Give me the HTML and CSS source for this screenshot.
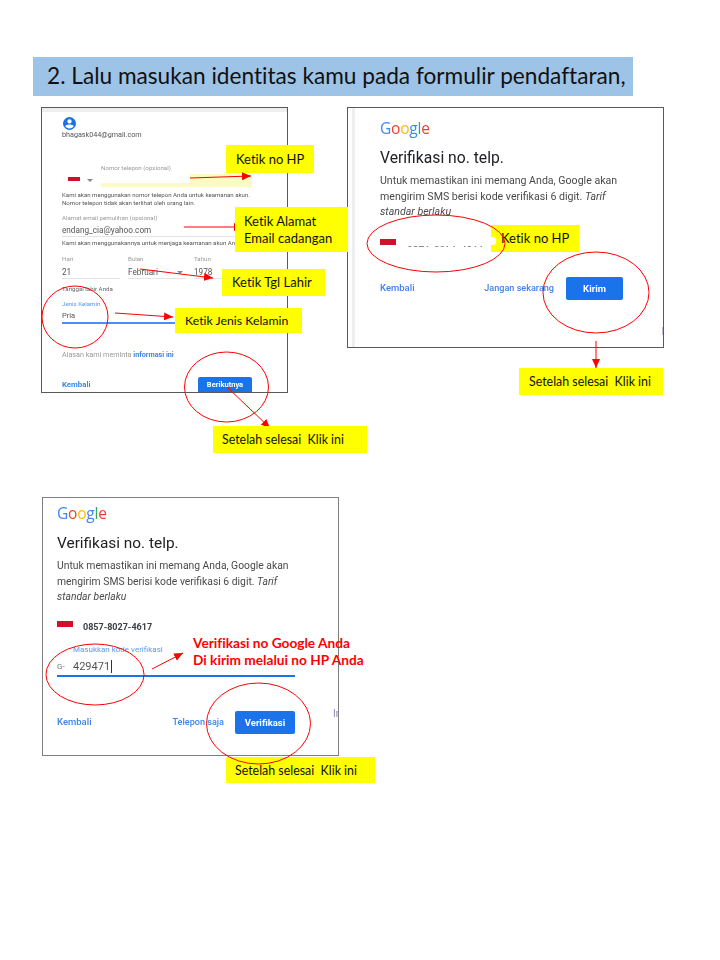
FILE: index.html
```html
<!DOCTYPE html>
<html lang="id">
<head>
<meta charset="utf-8">
<title>Formulir pendaftaran</title>
<link rel="stylesheet" href="styles.css">
</head>
<body>
<main class="slide">
  <h1 class="title">2. Lalu masukan identitas kamu pada formulir pendaftaran,</h1>

  <section class="shot shot-one">
    <div class="strip"></div>
    <div class="form">
      <svg class="avatar" viewBox="0 0 24 24"><path fill="#1a73e8" d="M12 0a12 12 0 1 0 0 24 12 12 0 0 0 0-24zm0 4a4 4 0 1 1 0 8 4 4 0 0 1 0-8zm0 17c-3.300 0-6.200-1.600-7.900-4.100C5.500 14.900 9.500 14 12 14s6.500.9 7.900 2.900C18.200 19.400 15.300 21 12 21z"/></svg>
      <p class="account">bhagask044@gmail.com</p>
      <div class="phone-field">
        <div class="country"><span class="flag flag-small"></span><span class="caret"></span></div>
        <div class="phone-input">
          <p class="small muted">Nomor telepon (opsional)</p>
          <div class="autofill"><div class="autofill-mask"></div></div>
        </div>
      </div>
      <p class="help help-one">Kami akan menggunakan nomor telepon Anda untuk keamanan akun.<br>Nomor telepon tidak akan terlihat oleh orang lain.</p>
      <p class="small muted recovery">Alamat email pemulihan (opsional)</p>
      <p class="value email">endang_cia@yahoo.com</p>
      <p class="help help-two">Kami akan menggunakannya untuk menjaga keamanan akun Anda</p>
      <div class="dates">
        <div class="date"><span class="small muted">Hari</span><span class="value date-value">21</span></div>
        <div class="date"><span class="small muted">Bulan</span><span class="value date-value">Februari<span class="caret"></span></span></div>
        <div class="date"><span class="small muted">Tahun</span><span class="value date-value">1978</span></div>
      </div>
      <p class="small birth">Tanggal lahir Anda</p>
      <p class="small gender-label">Jenis Kelamin</p>
      <p class="gender">Pria</p>
      <p class="reason">Alasan kami meminta <b>informasi ini</b></p>
      <div class="footer">
        <span class="link">Kembali</span>
        <span class="button next">Berikutnya</span>
      </div>
    </div>
  </section>

  <section class="shot shot-two">
    <div class="verify">
      <div class="logo"><i class="g1">G</i><i class="g2">o</i><i class="g3">o</i><i class="g4">g</i><i class="g5">l</i><i class="g6">e</i></div>
      <h2>Verifikasi no. telp.</h2>
      <p class="lead">Untuk memastikan ini memang Anda, Google akan mengirim SMS berisi kode verifikasi 6 digit. <em>Tarif standar berlaku</em></p>
      <div class="number-row">
        <span class="flag"></span>
        <div class="masked"><span>0821-3371-4011</span></div>
      </div>
      <div class="actions">
        <span class="link">Kembali</span>
        <span class="link push">Jangan sekarang</span>
        <span class="button send">Kirim</span>
      </div>
    </div>
    <span class="speck"></span>
  </section>

  <section class="shot shot-three">
    <div class="logo"><i class="g1">G</i><i class="g2">o</i><i class="g3">o</i><i class="g4">g</i><i class="g5">l</i><i class="g6">e</i></div>
    <h2>Verifikasi no. telp.</h2>
    <p class="lead">Untuk memastikan ini memang Anda, Google akan mengirim SMS berisi kode verifikasi 6 digit. <em>Tarif standar berlaku</em></p>
    <div class="number-row full">
      <span class="flag"></span>
      <b class="number">0857-8027-4617</b>
    </div>
    <p class="code-label">Masukkan kode verifikasi</p>
    <div class="code"><span class="prefix">G-</span><span class="digits">429471</span></div>
    <div class="actions">
      <span class="link">Kembali</span>
      <span class="link push">Telepon saja</span>
      <span class="button verify-btn">Verifikasi</span>
      <span class="stray">Ir</span>
    </div>
  </section>

  <svg class="ink" viewBox="0 0 720 960" aria-hidden="true">
    <defs>
      <marker id="head" markerUnits="userSpaceOnUse" markerWidth="9" markerHeight="8" refX="9" refY="4" orient="auto"><path d="M0 0L9 4L0 8z" fill="#f00"/></marker>
    </defs>
    <path d="M184 227H243" marker-end="url(#head)"/>
    <path d="M227 387L270 428" marker-end="url(#head)"/>
  </svg>

  <p class="tag tag-hp">Ketik no HP</p>
  <p class="tag tag-mail">Ketik Alamat<br>Email cadangan</p>
  <p class="tag tag-date">Ketik Tgl Lahir</p>
  <p class="tag tag-gender">Ketik Jenis Kelamin</p>
  <p class="tag tag-done-one">Setelah selesai&nbsp; Klik ini</p>
  <p class="tag tag-hp-two">Ketik no HP</p>
  <p class="tag tag-done-two">Setelah selesai&nbsp; Klik ini</p>
  <p class="tag tag-done-three">Setelah selesai&nbsp; Klik ini</p>

  <p class="note">Verifikasi no Google Anda<br>Di kirim melalui no HP Anda</p>

  <svg class="ink" viewBox="0 0 720 960" aria-hidden="true">
    <ellipse cx="75" cy="317" rx="33" ry="31"/>
    <ellipse cx="226.500" cy="387" rx="42" ry="35"/>
    <ellipse cx="436" cy="243.500" rx="69" ry="28.500"/>
    <ellipse cx="596" cy="292.500" rx="53" ry="40.500"/>
    <ellipse cx="95" cy="674.500" rx="49" ry="30.500"/>
    <ellipse cx="258.500" cy="723.500" rx="52" ry="40.500"/>
    <path d="M190 178L251 176" marker-end="url(#head)"/>
    <path d="M140 269L213 278" marker-end="url(#head)"/>
    <path d="M115 313L173 317" marker-end="url(#head)"/>
    <path d="M596 341V368" marker-end="url(#head)"/>
    <path d="M152 669L183 653" marker-end="url(#head)"/>
  </svg>
</main>
</body>
</html>
```

FILE: styles.css
```css
* { box-sizing: border-box; }
html, body { margin: 0; padding: 0; background: #fff; }
p, h1, h2 { margin: 0; font-weight: normal; }
i { font-style: normal; }

.slide {
  position: relative;
  width: 720px;
  height: 960px;
  overflow: hidden;
  background: #fff;
  font-family: Roboto, "Liberation Sans", sans-serif;
}

.title {
  position: absolute;
  left: 33px;
  top: 57px;
  width: 600px;
  height: 39px;
  padding-left: 14px;
  display: flex;
  align-items: center;
  background: #9dc3e6;
  color: #111;
  font: 22.650px/1 Lato, sans-serif;
  font-variant-ligatures: none;
  white-space: nowrap;
}

/* pasted screenshots */
.shot {
  position: absolute;
  overflow: hidden;
  background: #fff;
  border: 1px solid #595959;
}
.shot-one { left: 41px; top: 107px; width: 247px; height: 286px; }
.shot-two { left: 347px; top: 107px; width: 317px; height: 241px; display: flex; }
.shot-three { left: 42px; top: 497px; width: 297px; height: 259px; padding-left: 14px; border-color: #7f7f7f; }
.shot-three > * { filter: blur(.25px); }

.strip { height: 4px; background: #eeeeee; }
.form { padding-left: 20px; filter: blur(.3px); }

.avatar { display: block; width: 13px; height: 13px; margin: 4.500px 0 0 .500px; }
.account { font-size: 7.200px; line-height: 10px; color: #555; margin-top: .500px; }
.small { display: block; font-size: 6.150px; line-height: 10px; color: #666; white-space: nowrap; }
.muted { color: #9a9a9a; }

.phone-field { display: flex; margin-top: 23px; }
.country { width: 39px; padding: 14px 0 0 6px; display: flex; align-items: flex-start; }
.flag { display: block; width: 16px; height: 6px; background: #d0102c; flex: none; }
.flag-small { width: 12px; height: 3.500px; }
.caret {
  display: inline-block;
  width: 0;
  height: 0;
  margin: 2px 0 0 7px;
  border: 3px solid transparent;
  border-top: 3px solid #888;
  border-bottom: 0;
}
.autofill { width: 151px; height: 13px; margin-top: 1px; background: #fbfbc4; }
.autofill-mask { width: 89px; height: 9px; background: #fff; }

.help { font-size: 6.100px; line-height: 8px; color: #555; white-space: nowrap; }
.help-one { margin-top: 4px; }
.recovery { margin-top: 6px; }
.value { color: #555; font-size: 8.200px; }
.email { width: 173px; line-height: 12px; margin-top: 1px; height: 13px; border-bottom: 1px solid #e4e4e4; }
.help-two { margin-top: 2px; }

.dates { display: flex; gap: 8px; margin-top: 7px; }
.date { width: 58px; display: flex; flex-direction: column; }
.date-value { display: flex; justify-content: space-between; height: 14px; line-height: 14px; margin-top: 1px; border-bottom: 1px solid #e4e4e4; }
.date-value .caret { margin: 6px 3px 0 0; }
.birth { margin-top: 5px; }
.gender-label { margin-top: 5px; color: #5f96f0; }
.gender { width: 120px; margin-top: 1px; height: 14px; line-height: 12px; font-size: 7.500px; color: #555; border-bottom: 2px solid #4f8ef0; }
.reason { margin-top: 26px; font-size: 7.200px; line-height: 10px; color: #999; }
.reason b { color: #3f83e8; }

.footer { display: flex; justify-content: space-between; width: 190px; margin-top: 17px; }
.link { color: #3f83e8; font-weight: 700; font-size: 7.800px; line-height: 16px; white-space: nowrap; }
.button { display: block; background: #1a73e8; color: #fff; font-weight: 700; text-align: center; border-radius: 2px; }
.next { width: 54px; padding-bottom: 7px; font-size: 7.500px; line-height: 16px; }

/* verification cards */
.verify { flex: 1; margin-left: 4px; padding-left: 25px; border-left: 3px solid #eeeeee; filter: blur(.25px); }
.logo { height: 20px; margin-top: 10px; font: 15.500px/20px "Open Sans", sans-serif; letter-spacing: -.200px; }
.g1, .g4 { color: #4285f4; }
.g2, .g6 { color: #ea4335; }
.g3 { color: #fbbc05; }
.g5 { color: #34a853; }
h2 { font-size: 15.700px; line-height: 22px; margin-top: 9px; color: #202124; white-space: nowrap; }
.lead { width: 245px; margin-top: 4px; font-size: 10.600px; line-height: 15.500px; color: #4a4a4a; }
.number-row { display: flex; margin-top: 19px; height: 10px; }
.masked { height: 3px; margin: 7px 0 0 11px; overflow: hidden; color: #888; font-size: 10px; font-weight: 700; line-height: 11px; }
.masked span { display: block; margin-top: -8px; }
.actions { display: flex; align-items: center; width: 243px; margin-top: 28px; }
.actions .link { font-size: 9.500px; font-weight: 500; }
.actions .push { margin-left: auto; font-size: 9.100px; }
.send, .verify-btn { height: 23px; line-height: 23px; font-size: 9.500px; margin-left: 12px; }
.send { width: 57px; }
.speck { position: absolute; right: 0; top: 219px; width: 1px; height: 8px; background: #c9b6cf; }

.shot-three .logo { margin-top: 5px; }
.shot-three h2 { margin-top: 9px; font-size: 15.400px; }
.shot-three .lead { font-size: 10.350px; }
.full { margin-top: 16px; height: 12px; }
.number { margin-left: 10px; font-size: 9px; line-height: 12px; color: #3c4043; }
.code-label { margin: 12px 0 0 16px; font-size: 8px; line-height: 10px; color: #5f96f0; }
.code { display: flex; width: 238px; height: 17px; margin-top: 5px; border-bottom: 2px solid #1a73e8; font-size: 11px; line-height: 14px; color: #555; }
.prefix { width: 16px; font-size: 8px; color: #777; }
.digits { padding-right: 1px; border-right: 1px solid #333; height: 13px; }
.shot-three .actions { width: 238px; margin-top: 34px; }
.verify-btn { flex: none; width: 60px; margin-left: 11px; }
.stray { flex: none; margin: -16px -43px 0 38px; width: 5px; font-size: 10px; line-height: 12px; color: #8f7fb0; }

/* slide annotations */
.ink { position: absolute; left: 0; top: 0; width: 720px; height: 960px; pointer-events: none; }
.ink ellipse, .ink path { fill: none; stroke: #f00; stroke-width: 1; }
.ink marker path { fill: #f00; stroke: none; }

.tag {
  position: absolute;
  display: flex;
  align-items: center;
  background: #ff0;
  color: #111100;
  font: 13px/17px Lato, sans-serif;
  font-variant-ligatures: none;
  white-space: nowrap;
}
.tag-hp { left: 226px; top: 145px; width: 88px; height: 28px; padding-left: 10px; }
.tag-mail { left: 235px; top: 207px; width: 113px; height: 45px; padding-left: 9px; }
.tag-date { left: 222px; top: 269px; width: 103px; height: 27px; padding-left: 10px; }
.tag-gender { left: 175px; top: 308px; width: 127px; height: 25px; padding-left: 10px; font-size: 12.300px; }
.tag-done-one { left: 213px; top: 426px; width: 154px; height: 27px; padding-left: 9px; font-size: 12.400px; }
.tag-hp-two { left: 491px; top: 225px; width: 88px; height: 27px; padding-left: 10px; }
.tag-hp-two::before { content: ""; position: absolute; left: 0; top: 12px; width: 5px; height: 8px; background: #fff; border-radius: 0 3px 3px 0; }
.tag-done-two { left: 519px; top: 368px; width: 144px; height: 27px; padding-left: 10px; font-size: 12.400px; }
.tag-done-three { left: 226px; top: 757px; width: 149px; height: 26px; padding-left: 9px; font-size: 12.400px; }

.note {
  position: absolute;
  left: 193px;
  top: 634px;
  color: #f00;
  font: 700 13.700px/17px Lato, sans-serif;
  font-variant-ligatures: none;
  white-space: nowrap;
}
```
